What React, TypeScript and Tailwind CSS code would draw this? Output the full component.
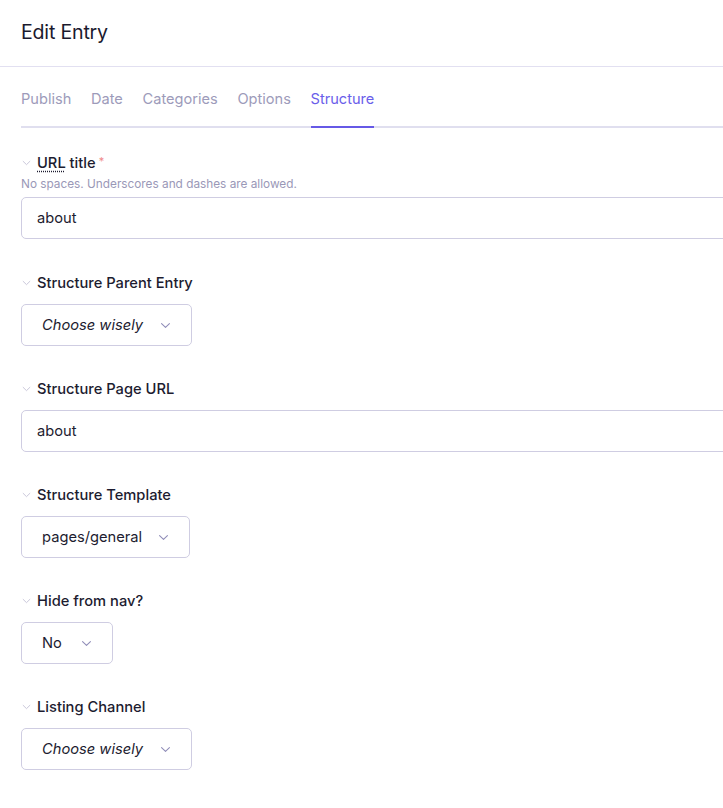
import React from "react";

const Chevron = ({ className }: { className?: string }) => (
  <svg viewBox="0 0 12 8" className={className} fill="none" stroke="currentColor" strokeWidth="1.2" strokeLinecap="round" strokeLinejoin="round">
    <path d="M1.5 1.8 6 6.2l4.5-4.4" />
  </svg>
);

const Label = ({ children, required }: { children: React.ReactNode; required?: boolean }) => (
  <div className="flex items-center h-5">
    <Chevron className="w-[9px] h-[6px] text-[#c4c2d6] ml-[1px] mr-[6px]" />
    <span className="text-[14.7px] font-medium text-[#1d1c30] leading-5">{children}</span>
    {required && <span className="text-[#f08a8a] text-[11px] ml-[3px] -mt-[4px]">*</span>}
  </div>
);

const TextInput = ({ value }: { value: string }) => (
  <div className="h-[42px] w-[760px] border border-[#cfcde2] rounded-[5px] flex items-center pl-[15px] text-[14.7px] text-[#1d1c30] bg-white">
    {value}
  </div>
);

const Select = ({ value, italic, width }: { value: string; italic?: boolean; width: string }) => (
  <div className={`h-[42px] ${width} border border-[#cfcde2] rounded-[5px] flex items-center justify-between pl-[20px] pr-[20px] text-[14.7px] text-[#1d1c30] bg-white`}>
    <span className={italic ? "italic" : ""}>{value}</span>
    <Chevron className="w-[11px] h-[7px] text-[#8f8cb8]" />
  </div>
);

export default function App() {
  const tabs = ["Publish", "Date", "Categories", "Options", "Structure"];
  return (
    <div className="w-[723px] h-[808px] overflow-hidden bg-white" style={{ fontFamily: "Inter, 'Noto Sans', sans-serif" }}>
      <div className="h-[67px] border-b border-[#e2e0f1] flex items-center pl-[21px]">
        <h1 className="text-[19.6px] font-normal text-[#1b1a2e] tracking-[-0.2px]">Edit Entry</h1>
      </div>
      <div className="pl-[21px]">
        <div className="flex gap-[19.7px] border-b-2 border-[#e0dfef] w-[760px]">
          {tabs.map((t) => (
            <div
              key={t}
              className={`pt-[22px] pb-[17px] -mb-[2px] text-[14.6px] leading-5 ${t === "Structure" ? "text-[#6a5eea] border-b-2 border-[#6659e6]" : "text-[#9d9bba] border-b-2 border-transparent"}`}
            >
              {t}
            </div>
          ))}
        </div>
        <div className="pt-[25px] flex flex-col">
          <div className="flex flex-col">
            <Label required>
              <span className="underline decoration-dotted decoration-[#1d1c30] underline-offset-[3px]">URL</span> title
            </Label>
            <div className="text-[11.8px] text-[#9a98b7] leading-4 mt-[3px] mb-[5px]">No spaces. Underscores and dashes are allowed.</div>
            <TextInput value="about" />
          </div>
          <div className="flex flex-col mt-[34px]">
            <Label>Structure Parent Entry</Label>
            <div className="mt-[11px]"><Select value="Choose wisely" italic width="w-[171px]" /></div>
          </div>
          <div className="flex flex-col mt-[33px]">
            <Label>Structure Page URL</Label>
            <div className="mt-[11px]"><TextInput value="about" /></div>
          </div>
          <div className="flex flex-col mt-[33px]">
            <Label>Structure Template</Label>
            <div className="mt-[11px]"><Select value="pages/general" width="w-[169px]" /></div>
          </div>
          <div className="flex flex-col mt-[33px]">
            <Label>Hide from nav?</Label>
            <div className="mt-[11px]"><Select value="No" width="w-[92px]" /></div>
          </div>
          <div className="flex flex-col mt-[33px]">
            <Label>Listing Channel</Label>
            <div className="mt-[11px]"><Select value="Choose wisely" italic width="w-[171px]" /></div>
          </div>
        </div>
      </div>
    </div>
  );
}
